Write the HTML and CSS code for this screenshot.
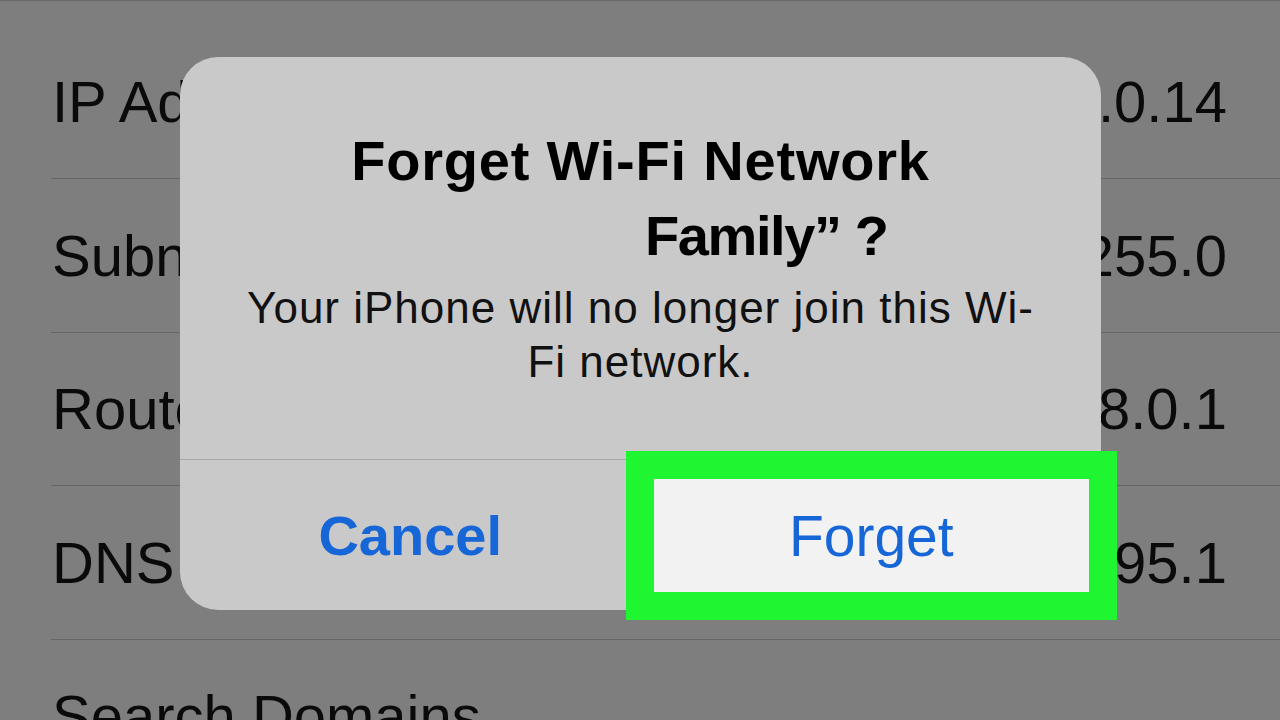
FILE: index.html
```html
<!DOCTYPE html>
<html lang="en">
  <head>
    <meta charset="UTF-8" />
    <meta name="viewport" content="width=device-width, initial-scale=1.0" />
    <title>Forget Wi-Fi Network</title>
    <link rel="stylesheet" href="styles.css">
  </head>
  <body>
    <div class="screen">
      <ul class="settings-list">
        <li class="settings-row">
          <span class="row-label">IP Address</span>
          <span class="row-value">192.168.0.14</span>
        </li>
        <li class="settings-row">
          <span class="row-label">Subnet Mask</span>
          <span class="row-value">255.255.255.0</span>
        </li>
        <li class="settings-row">
          <span class="row-label">Router</span>
          <span class="row-value">192.168.0.1</span>
        </li>
        <li class="settings-row">
          <span class="row-label">DNS</span>
          <span class="row-value">192.168.195.1</span>
        </li>
        <li class="settings-row">
          <span class="row-label">Search Domains</span>
          <span class="row-value"></span>
        </li>
      </ul>

      <div class="alert">
        <div class="alert-body">
          <h2 class="alert-title">
            <span class="alert-title-line">Forget Wi-Fi Network</span>
            <span class="alert-name">Family” ?</span>
          </h2>
          <p class="alert-message">Your iPhone will no longer join this Wi-<br>Fi network.</p>
        </div>
        <div class="alert-actions">
          <button class="alert-btn alert-btn-cancel">Cancel</button>
          <button class="alert-btn alert-btn-forget">Forget</button>
        </div>
      </div>
    </div>
  </body>
</html>
```

FILE: styles.css
```css
body {
    margin: 0;
    background-color: #7e7e7e;
    font-family: "Liberation Sans", Arial, sans-serif;
    color: #0a0a0a;
    overflow: hidden;
}
.screen {
    position: relative;
    width: 1280px;
    height: 720px;
    overflow: hidden;
}
.settings-list {
    list-style: none;
    margin: 0;
    padding: 24.5px 0 0 0;
    border-top: 1px solid #6a6a6a;
}
.settings-row {
    box-sizing: border-box;
    height: 153.5px;
    margin-left: 51px;
    padding: 0 53px 0 1px;
    border-bottom: 1px solid #666;
    display: flex;
    justify-content: space-between;
    align-items: center;
    font-size: 58px;
}

/* alert dialog over the list */
.alert {
    position: absolute;
    left: 180px;
    top: 57px;
    width: 921px;
    height: 553px;
    box-sizing: border-box;
    background-color: #c9c9c9;
    border-radius: 38px;
    display: flex;
    flex-direction: column;
}
.alert-body {
    flex: 1;
    padding-top: 66px;
    text-align: center;
}
.alert-title {
    margin: 0;
    font-size: 56px;
    font-weight: bold;
    line-height: 75px;
    color: #000;
}
.alert-title-line {
    display: block;
    letter-spacing: 0.8px;
}
.alert-name {
    display: block;
    text-align: left;
    padding-left: 465px;
    letter-spacing: -1.4px;
}
.alert-message {
    margin: 8px 0 0 0;
    font-size: 44px;
    line-height: 54px;
    letter-spacing: 1px;
    color: #111;
}
.alert-actions {
    box-sizing: border-box;
    height: 151px;
    border-top: 1px solid #a9a9a9;
    display: grid;
    grid-template-columns: 1fr 1fr;
}
.alert-btn {
    background: none;
    border: none;
    padding: 0;
    font-family: inherit;
    color: #1766d8;
}
.alert-btn-cancel {
    font-size: 56px;
    font-weight: bold;
}
.alert-btn-forget {
    font-size: 57px;
    margin: 19px 12px 18px 13px;
    background-color: #f2f2f2;
    outline: 28px solid #1ff531;
}
```
